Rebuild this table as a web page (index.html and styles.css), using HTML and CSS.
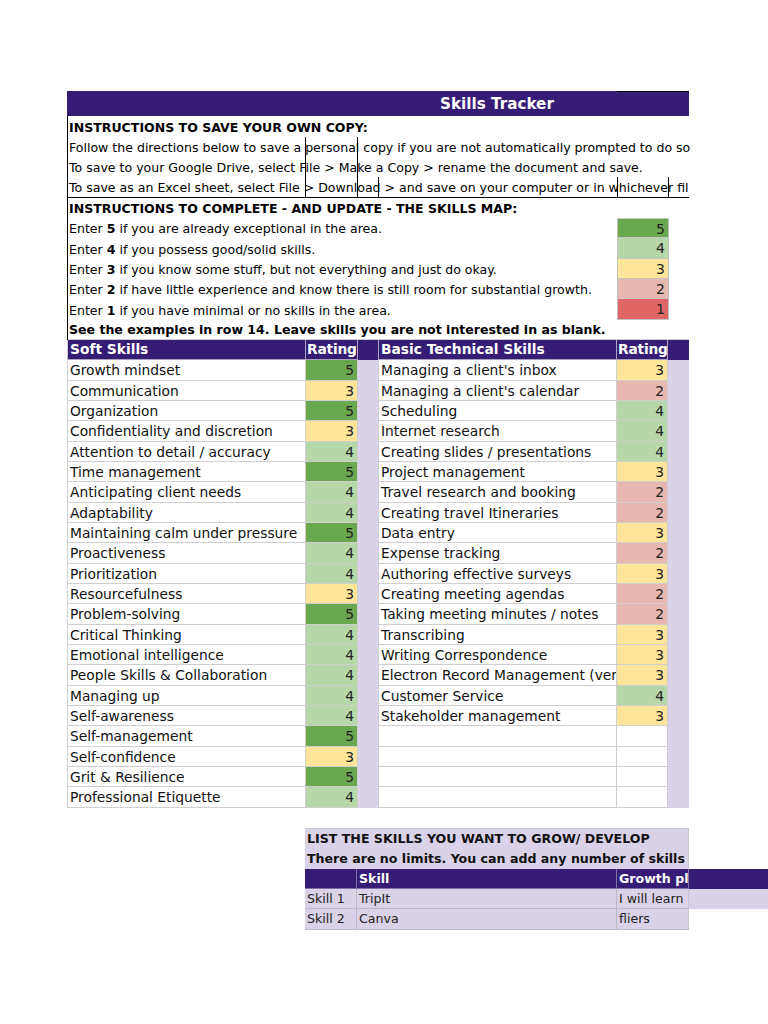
FILE: index.html
```html
<!DOCTYPE html>
<html lang="en">
<head>
<meta charset="utf-8">
<title>Skills Tracker</title>
<link rel="stylesheet" href="styles.css">
</head>
<body>
<div class="sheet">
  <div class="title-row">
    <div class="title">Skills Tracker</div>
    <div class="title-edge"></div>
  </div>

  <div class="instr">
    <div class="irow bold">INSTRUCTIONS TO SAVE YOUR OWN COPY:</div>
    <div class="irow lines-2">Follow the directions below to save a personal copy if you are not automatically prompted to do so</div>
    <div class="irow lines-2">To save to your Google Drive, select File &gt; Make a Copy &gt; rename the document and save.</div>
    <div class="irow lines-5 rule">To save as an Excel sheet, select File &gt; Download &gt; and save on your computer or in whichever fil</div>
    <div class="irow bold">INSTRUCTIONS TO COMPLETE - AND UPDATE - THE SKILLS MAP:</div>
    <div class="irow"><span class="itext">Enter <b>5</b> if you are already exceptional in the area.</span><span class="legend r5">5</span></div>
    <div class="irow"><span class="itext">Enter <b>4</b> if you possess good/solid skills.</span><span class="legend r4">4</span></div>
    <div class="irow"><span class="itext">Enter <b>3</b> if you know some stuff, but not everything and just do okay.</span><span class="legend r3">3</span></div>
    <div class="irow"><span class="itext">Enter <b>2</b> if have little experience and know there is still room for substantial growth.</span><span class="legend r2">2</span></div>
    <div class="irow"><span class="itext">Enter <b>1</b> if you have minimal or no skills in the area.</span><span class="legend r1">1</span></div>
    <div class="irow bold last">See the examples in row 14. Leave skills you are not interested in as blank.</div>
  </div>

  <div class="table">
    <div class="trow head">
      <div class="cell name">Soft Skills</div><div class="cell rt">Rating</div><div class="cell gap"></div>
      <div class="cell name two">Basic Technical Skills</div><div class="cell rt">Rating</div><div class="cell gap"></div>
    </div>
    <div class="trow"><div class="cell name">Growth mindset</div><div class="cell rt r5">5</div><div class="cell gap"></div><div class="cell name two">Managing a client's inbox</div><div class="cell rt r3">3</div><div class="cell gap"></div></div>
    <div class="trow"><div class="cell name">Communication</div><div class="cell rt r3">3</div><div class="cell gap"></div><div class="cell name two">Managing a client's calendar</div><div class="cell rt r2">2</div><div class="cell gap"></div></div>
    <div class="trow"><div class="cell name">Organization</div><div class="cell rt r5">5</div><div class="cell gap"></div><div class="cell name two">Scheduling</div><div class="cell rt r4">4</div><div class="cell gap"></div></div>
    <div class="trow"><div class="cell name">Confidentiality and discretion</div><div class="cell rt r3">3</div><div class="cell gap"></div><div class="cell name two">Internet research</div><div class="cell rt r4">4</div><div class="cell gap"></div></div>
    <div class="trow"><div class="cell name">Attention to detail / accuracy</div><div class="cell rt r4">4</div><div class="cell gap"></div><div class="cell name two">Creating slides / presentations</div><div class="cell rt r4">4</div><div class="cell gap"></div></div>
    <div class="trow"><div class="cell name">Time management</div><div class="cell rt r5">5</div><div class="cell gap"></div><div class="cell name two">Project management</div><div class="cell rt r3">3</div><div class="cell gap"></div></div>
    <div class="trow"><div class="cell name">Anticipating client needs</div><div class="cell rt r4">4</div><div class="cell gap"></div><div class="cell name two">Travel research and booking</div><div class="cell rt r2">2</div><div class="cell gap"></div></div>
    <div class="trow"><div class="cell name">Adaptability</div><div class="cell rt r4">4</div><div class="cell gap"></div><div class="cell name two">Creating travel Itineraries</div><div class="cell rt r2">2</div><div class="cell gap"></div></div>
    <div class="trow"><div class="cell name">Maintaining calm under pressure</div><div class="cell rt r5">5</div><div class="cell gap"></div><div class="cell name two">Data entry</div><div class="cell rt r3">3</div><div class="cell gap"></div></div>
    <div class="trow"><div class="cell name">Proactiveness</div><div class="cell rt r4">4</div><div class="cell gap"></div><div class="cell name two">Expense tracking</div><div class="cell rt r2">2</div><div class="cell gap"></div></div>
    <div class="trow"><div class="cell name">Prioritization</div><div class="cell rt r4">4</div><div class="cell gap"></div><div class="cell name two">Authoring effective surveys</div><div class="cell rt r3">3</div><div class="cell gap"></div></div>
    <div class="trow"><div class="cell name">Resourcefulness</div><div class="cell rt r3">3</div><div class="cell gap"></div><div class="cell name two">Creating meeting agendas</div><div class="cell rt r2">2</div><div class="cell gap"></div></div>
    <div class="trow"><div class="cell name">Problem-solving</div><div class="cell rt r5">5</div><div class="cell gap"></div><div class="cell name two">Taking meeting minutes / notes</div><div class="cell rt r2">2</div><div class="cell gap"></div></div>
    <div class="trow"><div class="cell name">Critical Thinking</div><div class="cell rt r4">4</div><div class="cell gap"></div><div class="cell name two">Transcribing</div><div class="cell rt r3">3</div><div class="cell gap"></div></div>
    <div class="trow"><div class="cell name">Emotional intelligence</div><div class="cell rt r4">4</div><div class="cell gap"></div><div class="cell name two">Writing Correspondence</div><div class="cell rt r3">3</div><div class="cell gap"></div></div>
    <div class="trow"><div class="cell name">People Skills &amp; Collaboration</div><div class="cell rt r4">4</div><div class="cell gap"></div><div class="cell name two">Electron Record Management (ver</div><div class="cell rt r3">3</div><div class="cell gap"></div></div>
    <div class="trow"><div class="cell name">Managing up</div><div class="cell rt r4">4</div><div class="cell gap"></div><div class="cell name two">Customer Service</div><div class="cell rt r4">4</div><div class="cell gap"></div></div>
    <div class="trow"><div class="cell name">Self-awareness</div><div class="cell rt r4">4</div><div class="cell gap"></div><div class="cell name two">Stakeholder management</div><div class="cell rt r3">3</div><div class="cell gap"></div></div>
    <div class="trow"><div class="cell name">Self-management</div><div class="cell rt r5">5</div><div class="cell gap"></div><div class="cell name two"></div><div class="cell rt"></div><div class="cell gap"></div></div>
    <div class="trow"><div class="cell name">Self-confidence</div><div class="cell rt r3">3</div><div class="cell gap"></div><div class="cell name two"></div><div class="cell rt"></div><div class="cell gap"></div></div>
    <div class="trow"><div class="cell name">Grit &amp; Resilience</div><div class="cell rt r5">5</div><div class="cell gap"></div><div class="cell name two"></div><div class="cell rt"></div><div class="cell gap"></div></div>
    <div class="trow"><div class="cell name">Professional Etiquette</div><div class="cell rt r4">4</div><div class="cell gap"></div><div class="cell name two"></div><div class="cell rt"></div><div class="cell gap"></div></div>
  </div>
</div>

<div class="grow">
  <div class="grow-note bold">LIST THE SKILLS YOU WANT TO GROW/ DEVELOP</div>
  <div class="grow-note bold">There are no limits. You can add any number of skills</div>
  <div class="grow-row grow-head">
    <div class="gcell label"></div><div class="gcell skill">Skill</div><div class="gcell plan">Growth pl</div><div class="gcell extra"></div>
  </div>
  <div class="grow-row">
    <div class="gcell label">Skill 1</div><div class="gcell skill">TripIt</div><div class="gcell plan">I will learn</div><div class="gcell extra"></div>
  </div>
  <div class="grow-row short">
    <div class="gcell label">Skill 2</div><div class="gcell skill">Canva</div><div class="gcell plan">fliers</div>
  </div>
</div>
</body>
</html>
```

FILE: styles.css
```css
:root {
  --rh: 20.33px;
  --purple: #351c75;
  --lav: #d9d2e9;
  --grid: #cfcfcf;
  --g5: #6aa84f;
  --g4: #b6d7a8;
  --g3: #ffe599;
  --g2: #e6b8af;
  --g1: #e06666;
}

* { box-sizing: border-box; }

body {
  margin: 0;
  background: #fff;
  color: #000;
  font-family: "DejaVu Sans", "Noto Sans", sans-serif;
  overflow: hidden;
}

.sheet {
  margin: 91px 0 0 67px;
  width: 622px;
}

/* Title bar */
.title-row {
  display: flex;
  height: 25.4px;
  background: var(--purple);
}
.title {
  flex: 1;
  padding-left: 373px;
  color: #fff;
  font-weight: bold;
  font-size: 15.2px;
  line-height: 26px;
  white-space: nowrap;
}
.title-edge {
  width: 72px;
  border-top: 1px solid #000;
}

/* Instructions block */
.instr {
  border-left: 1px solid #000;
  font-size: 12.55px;
}
.irow {
  display: flex;
  align-items: center;
  height: var(--rh);
  padding-left: 1px;
  padding-top: 1px;
  white-space: nowrap;
}
.bold { font-weight: bold; }
.itext { width: 548px; }
.irow b { font-weight: bold; }

.lines-2 {
  background-image: linear-gradient(#000, #000), linear-gradient(#000, #000);
  background-size: 1px 100%;
  background-repeat: no-repeat;
  background-position: 237px 0, 289px 0;
}
.lines-5 {
  background-image: linear-gradient(#000, #000), linear-gradient(#000, #000),
    linear-gradient(#000, #000), linear-gradient(#000, #000), linear-gradient(#000, #000);
  background-size: 1px 100%;
  background-repeat: no-repeat;
  background-position: 237px 0, 289px 0, 310px 0, 549px 0, 600px 0;
}
.rule { border-bottom: 1px solid #000; }
.last { border-bottom: 1px solid var(--grid); }

.legend {
  width: 52px;
  height: calc(100% + 1px);
  margin-top: -1px;
  text-align: right;
  padding-right: 3px;
  font-size: 14px;
  line-height: 20px;
  border: 1px solid #c4c4c4;
  border-top-width: 0;
  color: #222;
}
.irow:nth-child(6) .legend { border-top-width: 1px; }

/* Skills table */
.trow {
  display: grid;
  grid-template-columns: 239px 52px 20px 239px 51px 21px;
  height: var(--rh);
  font-size: 13.8px;
}
.cell {
  height: 100%;
  line-height: 20px;
  white-space: nowrap;
  overflow: hidden;
  border-bottom: 1px solid var(--grid);
  border-right: 1px solid var(--grid);
  color: #111;
}
.name { padding-left: 2px; }
.trow > .name:first-child { border-left: 1px solid var(--grid); }
.name.two { border-left: 1px solid var(--grid); }
.rt { text-align: right; padding-right: 3px; background: #fff; }
.gap { background: var(--lav); border: 0; }

.head .cell {
  background: var(--purple);
  color: #fff;
  font-weight: bold;
  font-size: 13.8px;
  line-height: 19px;
  border-color: #a9a2c0;
  overflow: visible;
}
.head .gap { border-bottom: 0; }
.head .rt { padding: 0 0 0 1px; text-align: left; letter-spacing: -0.2px; }

.r5 { background: var(--g5); }
.r4 { background: var(--g4); }
.r3 { background: var(--g3); }
.r2 { background: var(--g2); }
.r1 { background: var(--g1); }
.trow .r5, .trow .r4, .trow .r3, .trow .r2, .trow .r1 { color: #222; }

/* Growth list */
.grow {
  margin: calc(var(--rh) + 0.3px) 0 0 305px;
  width: 463px;
  font-size: 12.6px;
}
.grow-note {
  width: 384px;
  height: var(--rh);
  line-height: 20px;
  padding-left: 2px;
  background: var(--lav);
  white-space: nowrap;
  overflow: hidden;
  color: #111;
  border-right: 1px solid #c9c5d3;
}
.grow-note:first-child { border-top: 1px solid #c9c5d3; line-height: 19px; }

.grow-row {
  display: grid;
  grid-template-columns: 52px 260px 72px 79px;
  height: var(--rh);
  background: var(--lav);
  color: #222;
}
.grow-row.short {
  grid-template-columns: 52px 260px 72px;
  width: 384px;
}
.gcell {
  height: 100%;
  line-height: 19px;
  padding-left: 2px;
  white-space: nowrap;
  overflow: hidden;
  border-bottom: 1px solid #bdb8c8;
}
.gcell.label { border-right: 1px solid #bdb8c8; padding-left: 2px; }
.gcell.skill { border-right: 1px solid #bdb8c8; }
.gcell.plan { border-right: 1px solid #c9c5d3; }
.gcell.extra { border-bottom: 0; }

.grow-head {
  background: var(--purple);
  color: #fff;
  font-weight: bold;
}
.grow-head .gcell { border-color: #7e70a6; }
```
